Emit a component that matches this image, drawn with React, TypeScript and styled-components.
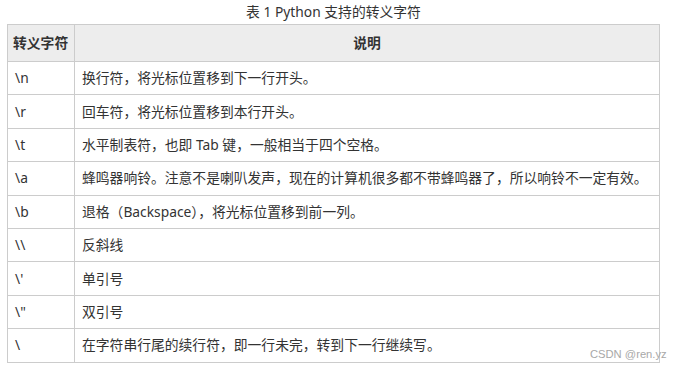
import React from 'react'
import styled, { createGlobalStyle } from 'styled-components'

const GlobalStyle = createGlobalStyle`
  html, body {
    margin: 0;
    padding: 0;
    background: #fff;
  }
  body {
    font-family: "Noto Sans", "Noto Sans CJK SC", sans-serif;
    color: #333;
  }
`

const Page = styled.div`
  position: relative;
  width: 679px;
  height: 371px;
  padding-left: 7px;
  box-sizing: border-box;
`

const Caption = styled.div`
  width: 653px;
  height: 24px;
  line-height: 24px;
  text-align: center;
  font-size: 13.8px;
  color: #333;
`

const Table = styled.table`
  width: 653px;
  border-collapse: collapse;
  table-layout: fixed;
  font-size: 13.8px;
  line-height: 18px;
  color: #333;
`

const HeadRow = styled.tr`
  height: 37px;
  background: #ededed;
`

const Row = styled.tr`
  height: 33.4px;
`

const Th = styled.th<{ $center?: boolean }>`
  border: 1px solid #ccc;
  padding: 0 5px;
  font-weight: bold;
  white-space: nowrap;
  text-align: ${p => (p.$center ? 'center' : 'left')};
`

const Td = styled.td`
  border: 1px solid #ccc;
  padding: 0 7px;
  white-space: nowrap;
`

const Watermark = styled.div`
  position: absolute;
  left: 590px;
  top: 348px;
  font-family: "Liberation Sans", Arial, sans-serif;
  font-size: 11.2px;
  color: #a8a8a8;
`

const rows: [string, string][] = [
  ['\\n', '换行符，将光标位置移到下一行开头。'],
  ['\\r', '回车符，将光标位置移到本行开头。'],
  ['\\t', '水平制表符，也即 Tab 键，一般相当于四个空格。'],
  ['\\a', '蜂鸣器响铃。注意不是喇叭发声，现在的计算机很多都不带蜂鸣器了，所以响铃不一定有效。'],
  ['\\b', '退格（Backspace），将光标位置移到前一列。'],
  ['\\\\', '反斜线'],
  ["\\'", '单引号'],
  ['\\"', '双引号'],
  ['\\', '在字符串行尾的续行符，即一行未完，转到下一行继续写。'],
]

export default function App() {
  return (
    <Page>
      <GlobalStyle />
      <Caption>表 1 Python 支持的转义字符</Caption>
      <Table>
        <colgroup>
          <col style={{ width: 67 }} />
          <col />
        </colgroup>
        <thead>
          <HeadRow>
            <Th>转义字符</Th>
            <Th $center>说明</Th>
          </HeadRow>
        </thead>
        <tbody>
          {rows.map(([code, desc]) => (
            <Row key={code + desc}>
              <Td>{code}</Td>
              <Td>{desc}</Td>
            </Row>
          ))}
        </tbody>
      </Table>
      <Watermark>CSDN @ren.yz</Watermark>
    </Page>
  )
}
